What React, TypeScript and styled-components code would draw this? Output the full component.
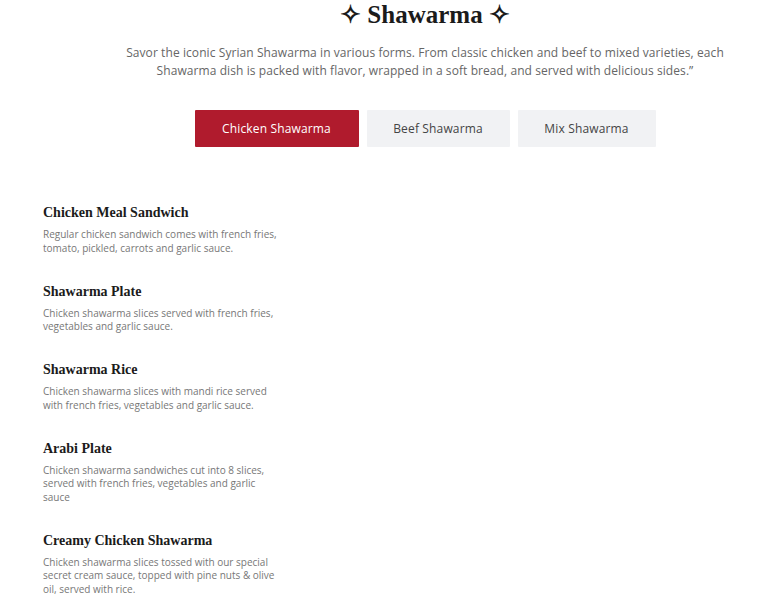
import React, { useState } from "react";
import styled, { createGlobalStyle } from "styled-components";

const Global = createGlobalStyle`
  html, body { margin: 0; padding: 0; background: #fff; overflow-x: hidden; }
  * { box-sizing: border-box; }
`;

const Page = styled.div`
  padding-left: 43px;
  width: 100%;
  overflow: hidden;
`;

const Inner = styled.div`
  width: 764px;
  display: flex;
  flex-direction: column;
`;

const Header = styled.header`
  display: flex;
  flex-direction: column;
  align-items: center;
`;

const Title = styled.h1`
  margin: 0;
  padding-top: 1px;
  font-family: "Liberation Serif", "DejaVu Serif", serif;
  font-weight: 700;
  font-size: 25px;
  line-height: 27px;
  color: #1b1b1b;
`;

const Intro = styled.p`
  margin: 16px 0 0;
  width: 620px;
  text-align: center;
  font-family: "Open Sans", sans-serif;
  font-size: 12px;
  letter-spacing: 0.08px;
  line-height: 18px;
  color: #666;
`;

const Tabs = styled.div`
  margin-top: 30px;
  display: flex;
  gap: 8px;
`;

const Tab = styled.button<{ $active: boolean; $w: number }>`
  width: ${(p) => p.$w}px;
  height: 37px;
  border: none;
  border-radius: 1px;
  background: ${(p) => (p.$active ? "#b01b2d" : "#f1f2f4")};
  color: ${(p) => (p.$active ? "#fff" : "#444")};
  font-family: "Open Sans", sans-serif;
  font-weight: 500;
  font-size: 12px;
  letter-spacing: 0.15px;
  cursor: pointer;
`;

const List = styled.ul`
  list-style: none;
  margin: 57px 0 0;
  padding: 0;
  width: 240px;
  display: flex;
  flex-direction: column;
  gap: 27.5px;
`;

const Item = styled.li`
  display: flex;
  flex-direction: column;
  gap: 6px;
`;

const ItemName = styled.h3`
  margin: 0;
  font-family: "Liberation Serif", "DejaVu Serif", serif;
  font-weight: 700;
  font-size: 14px;
  line-height: 18px;
  color: #1b1b1b;
`;

const ItemDesc = styled.p`
  margin: 0;
  font-family: "Open Sans", sans-serif;
  font-size: 10px;
  line-height: 13.5px;
  color: #777;
`;

const tabs = [
  { label: "Chicken Shawarma", w: 164 },
  { label: "Beef Shawarma", w: 143 },
  { label: "Mix Shawarma", w: 138 },
];

const items = [
  {
    name: "Chicken Meal Sandwich",
    desc: "Regular chicken sandwich comes with french fries, tomato, pickled, carrots and garlic sauce.",
  },
  {
    name: "Shawarma Plate",
    desc: "Chicken shawarma slices served with french fries, vegetables and garlic sauce.",
  },
  {
    name: "Shawarma Rice",
    desc: "Chicken shawarma slices with mandi rice served with french fries, vegetables and garlic sauce.",
  },
  {
    name: "Arabi Plate",
    desc: "Chicken shawarma sandwiches cut into 8 slices, served with french fries, vegetables and garlic sauce",
  },
  {
    name: "Creamy Chicken Shawarma",
    desc: "Chicken shawarma slices tossed with our special secret cream sauce, topped with pine nuts & olive oil, served with rice.",
  },
];

export default function App() {
  const [active, setActive] = useState(0);
  return (
    <>
      <Global />
      <Page>
        <Inner>
          <Header>
            <Title>✧ Shawarma ✧</Title>
            <Intro>
              Savor the iconic Syrian Shawarma in various forms. From classic chicken and beef to mixed varieties, each
              Shawarma dish is packed with flavor, wrapped in a soft bread, and served with delicious sides.”
            </Intro>
            <Tabs>
              {tabs.map((t, i) => (
                <Tab key={t.label} $active={i === active} $w={t.w} onClick={() => setActive(i)}>
                  {t.label}
                </Tab>
              ))}
            </Tabs>
          </Header>
          <List>
            {items.map((it) => (
              <Item key={it.name}>
                <ItemName>{it.name}</ItemName>
                <ItemDesc>{it.desc}</ItemDesc>
              </Item>
            ))}
          </List>
        </Inner>
      </Page>
    </>
  );
}
